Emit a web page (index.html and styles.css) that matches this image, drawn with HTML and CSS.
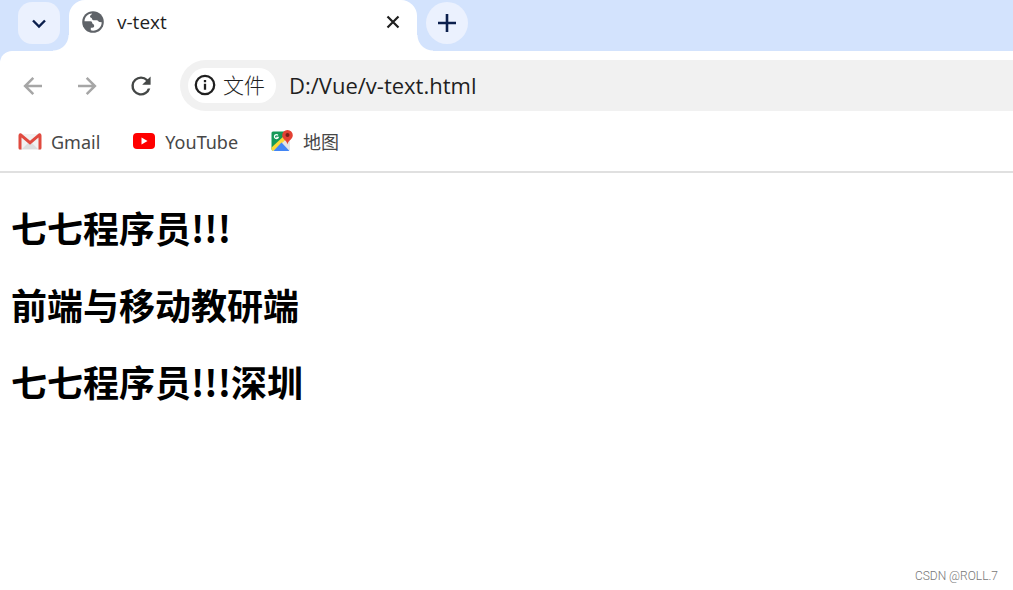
FILE: index.html
```html
<!DOCTYPE html>
<html lang="zh-CN">
<head>
<meta charset="utf-8">
<title>v-text</title>
<link rel="stylesheet" href="styles.css">
</head>
<body>
<div class="browser">
  <header>
    <div class="tabstrip">
      <button class="tab-search" type="button" aria-label="搜索标签页">
        <svg width="42" height="42" viewBox="0 0 42 42" fill="none" stroke="#0b1f4d" stroke-width="2.4"><path d="M15 18.500l6 6 6-6"/></svg>
      </button>
      <div class="tab">
        <svg class="globe" width="22" height="22" viewBox="0 0 22 22"><circle cx="11" cy="11" r="10.800" fill="#5f6368"/><path fill="#fff" d="M10.200 2.400C9.400 4 8 3.900 8 5.600c0 1.400 1.800 1 2.100 2.300.3 1.500 1.500 1.300 3 1.300h1.600c1.500 0 1.600 1.600 2.900 1.900l2.100.2c0 5-4 8.400-8.600 8.400-.9 0-1.600-.2-2.300-.4v-2.600c1.800 0 3.400-.2 3.400-1.800 0-2.200-2.100-1.800-2.100-3.400 0-1.200-1.200-1.300-2.700-1.300H2.500c.1-4.600 3.700-7.800 7.700-7.800z"/></svg>
        <span class="tab-title">v-text</span>
        <button class="close" type="button" aria-label="关闭">
          <svg width="16" height="16" viewBox="0 0 16 16" fill="none" stroke="#1f1f1f" stroke-width="2.2"><path d="M2.500 2.500l11 11M13.500 2.500l-11 11"/></svg>
        </button>
      </div>
      <button class="new-tab" type="button" aria-label="新标签页">
        <svg width="42" height="42" viewBox="0 0 42 42" fill="none" stroke="#0b1f4d" stroke-width="2.6"><path d="M12 21h18M21 12v18"/></svg>
      </button>
    </div>
    <div class="toolbar">
      <nav class="nav">
        <button type="button" aria-label="后退"><svg width="24" height="24" viewBox="0 0 24 24" fill="none" stroke="#a6a6a6" stroke-width="2.5"><path d="M21 12H4.500M12.300 3.800L4.100 12l8.200 8.200"/></svg></button>
        <button type="button" aria-label="前进"><svg width="24" height="24" viewBox="0 0 24 24" fill="none" stroke="#a6a6a6" stroke-width="2.5"><path d="M3 12h16.500M11.700 3.800l8.200 8.200-8.200 8.200"/></svg></button>
        <button type="button" aria-label="重新加载"><svg width="24" height="24" viewBox="2 2 20 20" fill="#444746"><path d="M17.650 6.350A7.960 7.960 0 0 0 12 4a8 8 0 1 0 7.730 10h-2.080A6 6 0 1 1 12 6c1.660 0 3.140.690 4.220 1.780L13 11h7V4z"/></svg></button>
      </nav>
      <div class="omnibox">
        <button class="chip" type="button">
          <svg width="22" height="22" viewBox="0 0 22 22" fill="none" stroke="#1f1f1f" stroke-width="2.3"><circle cx="11" cy="11" r="9.200"/><path d="M11 9.800v6M11 6v2.300"/></svg>
          <span>文件</span>
        </button>
        <input class="address" type="text" value="D:/Vue/v-text.html" aria-label="地址栏" spellcheck="false">
      </div>
    </div>
    <nav class="bookmarks">
      <a href="#">
        <svg width="24" height="24" viewBox="0 0 24 24"><path fill="#f1f1f1" d="M1 4h22v16H1z"/><path fill="#ddd" d="M4 19l6-6 2 1.500 2-1.500 6 6z"/><path fill="#e04a3f" d="M.500 5.500Q.500 3 3 3.300l9 7.400 9-7.400q2.500-.300 2.500 2.200V18q0 1.500-1.500 1.500h-1.500V7.500L12 14.800 3.500 7.500v12H2Q.500 19.500.500 18z"/></svg>
        <span>Gmail</span>
      </a>
      <a href="#">
        <svg width="24" height="24" viewBox="0 0 24 24"><rect x="1" y="3" width="22" height="16" rx="4" fill="#f00"/><path d="M9.500 7.500l6 3.500-6 3.500z" fill="#fff"/></svg>
        <span>YouTube</span>
      </a>
      <a href="#">
        <svg width="24" height="24" viewBox="0 0 24 24"><path fill="#e5e5e5" d="M2 2h18v18H2z"/><path fill="#159957" d="M3 1.500h12L19 6 3 20.500q-1.500 0-1.500-1.500V3q0-1.500 1.500-1.500z"/><path fill="#fdd835" d="M1.500 17.500L15 5l3 2.500L3.500 20.800Q1.500 21 1.500 19z"/><path fill="#4285f4" d="M3.500 21l8-8.500 8 8.500z"/><path d="M8 5.300a2 2 0 1 0 .300 2H6.300" fill="none" stroke="#fff" stroke-width="1.200"/><path fill="#e34133" d="M17.500 0a5.300 5.300 0 0 0-5.300 5.300c0 4 4.200 4.700 5.300 9 1.100-4.300 5.300-5 5.300-9A5.300 5.300 0 0 0 17.500 0z"/><circle cx="17.500" cy="5" r="2" fill="#7a2018"/></svg>
        <span>地图</span>
      </a>
    </nav>
  </header>
  <main class="page">
    <h2>七七程序员!!!</h2>
    <h2>前端与移动教研端</h2>
    <h2>七七程序员!!!深圳</h2>
  </main>
  <footer class="watermark">CSDN @ROLL.7</footer>
</div>
</body>
</html>
```
FILE: styles.css
```css
* {
  box-sizing: border-box;
}

body {
  margin: 0;
  background: #fff;
  color: #1f1f1f;
  font-family: "Noto Sans", "Noto Sans CJK SC", sans-serif;
}

button {
  display: flex;
  align-items: center;
  padding: 0;
  border: 0;
  background: none;
  color: inherit;
  font: inherit;
}

svg {
  display: block;
  flex: none;
}

.browser {
  display: flex;
  flex-direction: column;
  min-height: 100vh;
}

header {
  border-bottom: 2px solid #e0e0e0;
  background: linear-gradient(#d3e3fd 64px, #fff 64px);
}

.tabstrip {
  display: flex;
  align-items: flex-start;
  height: 51px;
  padding-left: 18px;
}

.tab-search,
.new-tab {
  margin-top: 2px;
  background: #ebf1fe;
}

.tab-search {
  border-radius: 14px;
}

.new-tab {
  border-radius: 50%;
}

.tab {
  position: relative;
  display: flex;
  align-items: center;
  flex: 0 1 348px;
  height: 51px;
  margin: 0 9px;
  padding: 0 16px 8px 13px;
  border-radius: 16px 16px 0 0;
  background: #fff;
  font-family: "Open Sans", sans-serif;
  font-size: 19px;
}

.tab::before,
.tab::after {
  content: "";
  position: absolute;
  bottom: 0;
  width: 16px;
  height: 16px;
}

.tab::before {
  right: 100%;
  background: radial-gradient(circle at 0 0, transparent 15px, #fff 16px);
}

.tab::after {
  left: 100%;
  background: radial-gradient(circle at 100% 0, transparent 15px, #fff 16px);
}

.tab-title {
  flex: 1;
  margin-left: 13px;
}

.toolbar {
  display: flex;
  align-items: center;
  padding: 9px 0 9px 21px;
  border-radius: 12px 0 0;
  background: #fff;
}

.nav {
  display: flex;
  gap: 30px;
  margin-right: 27px;
}

.omnibox {
  display: flex;
  align-items: center;
  flex: 1;
  height: 51px;
  padding-left: 8px;
  border-radius: 26px 0 0 26px;
  background: #f1f1f1;
}

.chip {
  gap: 7px;
  height: 35px;
  padding: 0 11px 2px 6px;
  border-radius: 18px;
  background: #fff;
  font-size: 21px;
  font-weight: 300;
  line-height: 32px;
}

.address {
  flex: 1;
  min-width: 0;
  margin-left: 13px;
  padding: 0 0 2px;
  border: 0;
  outline: 0;
  background: none;
  color: inherit;
  font-family: "Open Sans", sans-serif;
  font-size: 22px;
}

.bookmarks {
  display: flex;
  gap: 32px;
  padding: 6px 18px 13px;
  background: #fff;
}

.bookmarks a {
  display: flex;
  align-items: center;
  gap: 9px;
  height: 32px;
  color: #474747;
  font-size: 18px;
  line-height: 28px;
  text-decoration: none;
}

.page {
  flex: 1;
  padding: 31px 11px;
}

.page h2 {
  margin: 0 0 30px;
  color: #000;
  font-family: "Noto Sans CJK SC", sans-serif;
  font-size: 36px;
  line-height: 47px;
}

.watermark {
  padding: 0 15px 6px;
  color: #777;
  font-family: Roboto, sans-serif;
  font-size: 12px;
  font-weight: 300;
  line-height: 16px;
  text-align: right;
}
```
